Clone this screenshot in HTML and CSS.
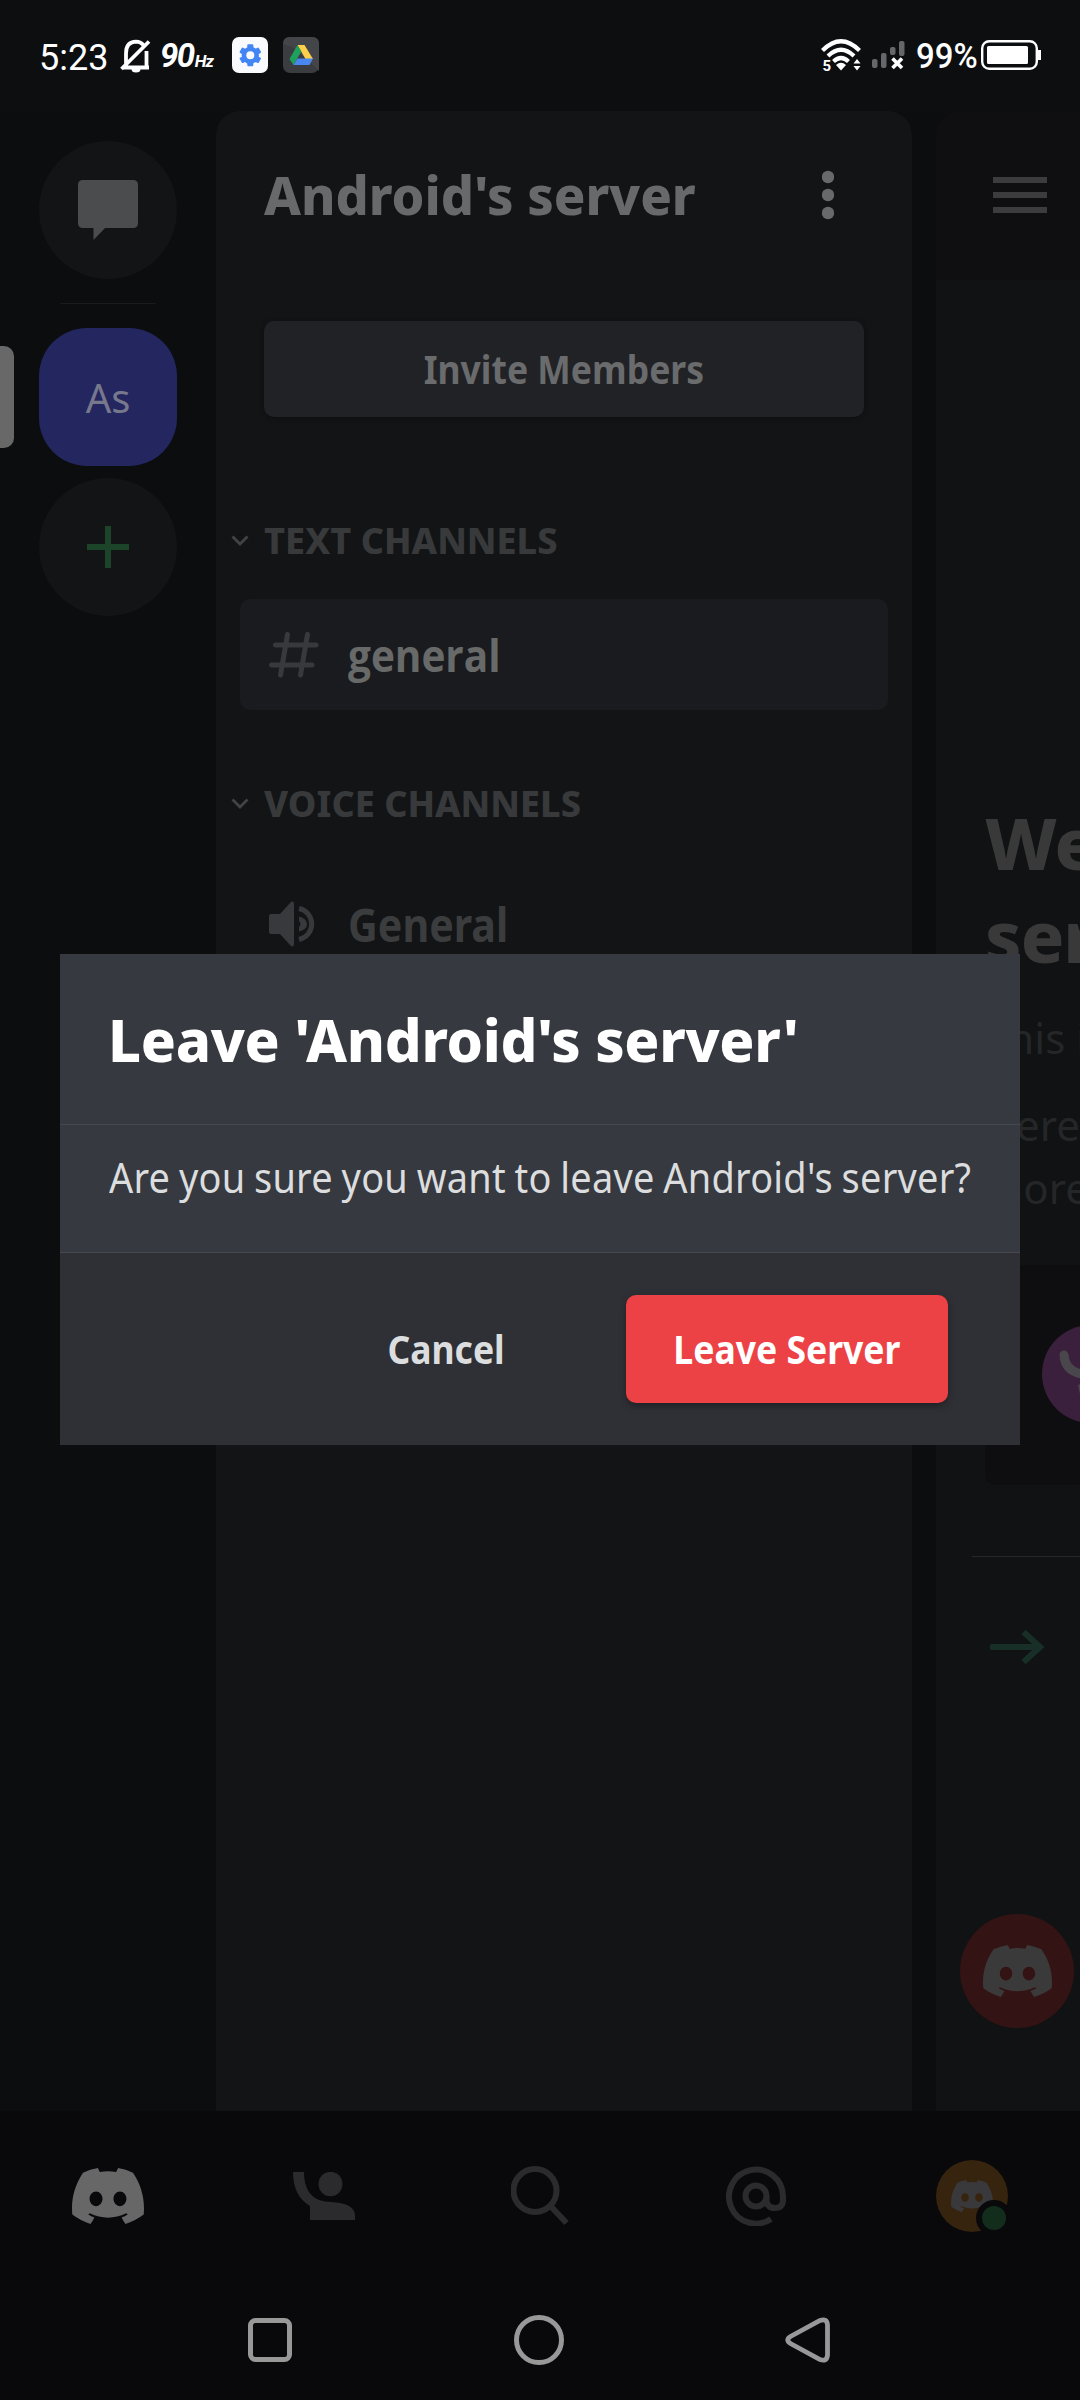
FILE: index.html
```
<!DOCTYPE html>
<html lang="en">
<head>
<meta charset="utf-8">
<title>Leave server</title>
<link rel="stylesheet" href="styles.css">
</head>
<body>
<svg width="0" height="0" class="defs">
  <symbol id="logo" viewBox="0 0 127.14 96.36" preserveAspectRatio="none"><path d="M107.7,8.07A105.15,105.15,0,0,0,81.47,0a72.06,72.06,0,0,0-3.36,6.83A97.68,97.68,0,0,0,49,6.83,72.37,72.37,0,0,0,45.64,0,105.89,105.89,0,0,0,19.39,8.09C2.79,32.65-1.71,56.6.54,80.21h0A105.73,105.73,0,0,0,32.71,96.36,77.7,77.7,0,0,0,39.6,85.25a68.42,68.42,0,0,1-10.85-5.18c.91-.66,1.8-1.34,2.66-2a75.57,75.57,0,0,0,64.32,0c.87.71,1.76,1.39,2.66,2a68.68,68.68,0,0,1-10.87,5.19,77,77,0,0,0,6.89,11.1A105.25,105.25,0,0,0,126.6,80.22h0C129.24,52.84,122.09,29.11,107.7,8.07ZM42.45,65.69C36.18,65.69,31,60,31,53s5-12.74,11.43-12.74S54,46,53.89,53,48.84,65.69,42.45,65.69Zm42.24,0C78.41,65.69,73.25,60,73.25,53s5-12.74,11.44-12.74S96.23,46,96.12,53,91.08,65.69,84.69,65.69Z"/></symbol>
</svg>
<div class="phone">
  <header class="status">
    <span class="clock">5:23</span>
    <svg class="bell" width="32" height="34" viewBox="0 0 32 34" fill="none" stroke="#fff" stroke-width="3.8"><path d="M2 28.500H29M6 28V14.500Q6 3 16 2.700Q21 2.700 23.500 6.500M26.500 12V28M1.500 30L29 2.500"/><path d="M11.500 30h9a4.500 3.500 0 0 1-9 0z" fill="#fff" stroke="none"/></svg>
    <span class="rate">90<small>Hz</small></span>
    <svg class="app1" width="36" height="36" viewBox="0 0 36 36"><rect width="36" height="36" rx="7" fill="#f8fafd"/><g fill="#4285f4"><circle cx="18.300" cy="18.300" r="8.600"/><rect x="15.300" y="7.300" width="6" height="22" rx="1"/><rect x="15.300" y="7.300" width="6" height="22" rx="1" transform="rotate(60 18.300 18.300)"/><rect x="15.300" y="7.300" width="6" height="22" rx="1" transform="rotate(120 18.300 18.300)"/></g><circle cx="18.300" cy="18.300" r="4" fill="#f8fafd"/></svg>
    <svg class="app2" width="36" height="36" viewBox="0 0 36 36"><rect width="36" height="36" rx="7" fill="#3b3c3f"/><path d="M0 7L9 10L30 28L36 34V7Q36 0 29 0H7Q0 0 0 7Z" fill="#444548"/><path d="M14.500 8H21.500L30 22H22.500Z" fill="#fdd04b"/><path d="M14.500 8L18.300 14.500L10.500 28L6.500 22Z" fill="#1fa15d"/><path d="M14.500 21.500H30L26.500 28H10.500Z" fill="#4a86ef"/></svg>
    <span class="grow"></span>
    <svg class="wifi" width="40" height="34" viewBox="0 0 40 34"><g fill="none" stroke="#fff" stroke-width="4.200"><path d="M1.500 11.500Q20-7 38.500 11.500"/><path d="M7 17Q20 4.500 33 17"/><path d="M12.500 22.500Q20 15.500 27.500 22.500"/></g><path d="M15 26Q20 21.500 25 26L20 31.500Z" fill="#fff"/><path d="M32.500 24.500L36 20L39.500 24.500ZM32.500 27L36 31.500L39.500 27Z" fill="#fff"/><text x="1.500" y="32" fill="#fff" font-family="Roboto" font-size="15" font-weight="700">5</text></svg>
    <svg class="signal" width="34" height="32" viewBox="0 0 34 32"><g fill="#66676a"><rect x="0" y="19" width="5.500" height="9" rx="2"/><rect x="9" y="13" width="5.500" height="15" rx="2"/><rect x="18" y="7" width="5.500" height="8" rx="2"/><rect x="27" y="1" width="5.500" height="15" rx="2"/></g><path d="M20.500 18.500L30 28M30 18.500L20.500 28" stroke="#fff" stroke-width="3.600"/></svg>
    <span class="pct">99%</span>
    <svg class="battery" width="60" height="30" viewBox="0 0 60 30"><rect x="1.200" y="1.200" width="54.600" height="27.600" rx="7" fill="none" stroke="#fff" stroke-width="2.400"/><rect x="6" y="6" width="41" height="18" rx="1.500" fill="#fff"/><rect x="56" y="10" width="4" height="10" fill="#fff"/></svg>
  </header>
  <main class="app">
    <nav class="rail">
      <div class="round dm"><svg width="60" height="60" viewBox="0 0 60 60"><path d="M5 0H55Q60 0 60 5V43Q60 48 55 48H27L15.500 60V48H5Q0 48 0 43V5Q0 0 5 0Z" fill="#4b4c4e"/></svg></div>
      <div class="rule"></div>
      <div class="server"><span class="pill"></span><span>As</span></div>
      <div class="round"><svg width="42" height="42" viewBox="0 0 42 42"><path d="M18 0h6v18h18v6H24v18h-6V24H0v-6h18z" fill="#1c4429"/></svg></div>
    </nav>
    <section class="channels">
      <div class="head"><h1>Android's server</h1><svg width="12" height="50" viewBox="0 0 12 50" fill="#68696a"><circle cx="6" cy="7" r="6.200"/><circle cx="6" cy="25" r="6.200"/><circle cx="6" cy="43" r="6.200"/></svg></div>
      <button class="invite"><span class="narrow">Invite Members</span></button>
      <div class="category"><svg width="18" height="12" viewBox="0 0 18 12"><path d="M1.500 1.500L9 9L16.500 1.500" fill="none" stroke="#424345" stroke-width="2.800"/></svg><span>TEXT CHANNELS</span></div>
      <div class="channel selected"><svg width="50" height="46" viewBox="0 0 50 46" fill="none" stroke="#38393c" stroke-width="5" stroke-linecap="round"><path d="M6.500 13H47M2.500 33H43"/><path d="M18.500 2.500L11.500 43M38.500 2.500L31.500 43"/></svg><span>general</span></div>
      <div class="category voice"><svg width="18" height="12" viewBox="0 0 18 12"><path d="M1.500 1.500L9 9L16.500 1.500" fill="none" stroke="#424345" stroke-width="2.800"/></svg><span>VOICE CHANNELS</span></div>
      <div class="channel"><svg width="50" height="46" viewBox="0 0 50 46"><path d="M2 13H11L21.500 1.500Q25-1 25 3V43Q25 47 21.500 44.500L11 33H2Q0 33 0 31V15Q0 13 2 13Z" fill="#38393c"/><path d="M30 7.500A15.800 15.800 0 0 1 30 38.500" fill="none" stroke="#38393c" stroke-width="5"/><path d="M30 15.500Q38 17.500 38 23T30 30.500V26Q33 23 30 20Z" fill="#38393c"/></svg><span>General</span></div>
    </section>
    <section class="chat">
      <div class="bar"><svg width="54" height="36" viewBox="0 0 54 36" fill="#3c3c3e"><path d="M0 0h54v6H0zM0 15h54v6H0zM0 30h54v6H0z"/></svg></div>
      <h2>Welcome to<br>server</h2>
      <p>This is</p>
      <p>Here<br><span class="more">more</span></p>
      <div class="card"><svg width="98" height="98" viewBox="0 0 98 98"><circle cx="49" cy="49" r="49" fill="#3a203c"/><path d="M22 30Q23 46 40 49Q46 43 52 32" fill="none" stroke="#4a474c" stroke-width="9" stroke-linecap="round"/><path d="M36 60L44 57V70L38 69Z" fill="#4a474c"/></svg></div>
      <div class="line"></div>
      <svg class="arrow" width="54" height="36" viewBox="0 0 54 36" fill="none" stroke="#182f27" stroke-width="6"><path d="M2.500 18H49" stroke-linecap="round"/><path d="M33.500 3L50 18L33.500 33"/></svg>
      <div class="avatar"><svg width="69" height="52" fill="#3b3a3a"><use href="#logo"/></svg></div>
    </section>
  </main>
  <nav class="tabs">
    <div><svg width="72" height="56" fill="#676768"><use href="#logo"/></svg></div>
    <div><svg width="62" height="48" viewBox="0 0 62 48" fill="#2b2b2d"><path d="M0 0H11Q11 22 26 28Q32 30 38 30Q61 31 62 43V48H17V34Q0 24 0 0Z"/><ellipse cx="37.500" cy="12" rx="12" ry="12.200"/></svg></div>
    <div><svg width="58" height="60" viewBox="0 0 58 60" fill="none" stroke="#2b2b2d" stroke-width="6"><circle cx="24" cy="24.500" r="21.500"/><path d="M39.500 40L55.500 57"/></svg></div>
    <div><svg width="60" height="60" viewBox="0 0 60 60" fill="none" stroke="#2b2b2d" stroke-width="6"><path d="M45 53A27 27 0 1 1 57 30V35.500Q56 42 49 42Q41 42 40.500 34V30"/><circle cx="30" cy="30" r="10.500"/></svg></div>
    <div><div class="me"><svg width="42" height="32" fill="#39383a"><use href="#logo"/></svg><i></i></div></div>
  </nav>
  <nav class="system">
    <svg width="44" height="44" viewBox="0 0 44 44"><rect x="2.500" y="2.500" width="39" height="39" rx="5" fill="none" stroke="#989899" stroke-width="5"/></svg>
    <svg width="50" height="50" viewBox="0 0 50 50"><circle cx="25" cy="25" r="22.500" fill="none" stroke="#989899" stroke-width="5"/></svg>
    <svg width="46" height="46" viewBox="0 0 46 46"><path d="M5.500 19.500L35 3.500Q42 1 42.500 8V38Q42 45 35 42.500L5.500 26.500Q0 23 5.500 19.500Z" fill="none" stroke="#989899" stroke-width="4.800"/></svg>
  </nav>
  <div class="dialog">
    <h3>Leave 'Android's server'</h3>
    <div class="body"><span>Are you sure you want to leave Android's server?</span></div>
    <div class="actions"><button class="cancel"><span class="narrow">Cancel</span></button><button class="leave"><span class="narrow">Leave Server</span></button></div>
  </div>
</div>
</body>
</html>
```
FILE: styles.css
```
*{box-sizing:border-box;margin:0;padding:0}
body{width:1080px;height:2400px;overflow:hidden;background:#09090b;font-family:"Noto Sans","Open Sans",sans-serif}
button{border:0;background:none;font:inherit;color:inherit}
svg{display:block;flex:none}
.defs{position:absolute}
.phone{position:relative;width:1080px;height:2400px;display:flex;flex-direction:column}

/* Status bar */
.status{height:111px;padding:0 39px 0 39px;display:flex;align-items:flex-start;background:#0c0e10;color:#fff;font-family:Roboto,sans-serif}
.clock{font-size:36px;line-height:40px;margin-top:38px;width:81px;white-space:nowrap}
.bell{margin-top:39px}
.rate{margin:36px 0 0 8px;width:72px;font:italic 700 33px/40px Roboto,sans-serif;white-space:nowrap;letter-spacing:-1.500px}
.rate small{font-size:17px;letter-spacing:-1px;margin-left:1px}
.app1{margin-top:37px}
.app2{margin:37px 0 0 15px}
.grow{flex:1}
.wifi{margin-top:39px}
.signal{margin:40px 0 0 11px}
.pct{margin:37px 0 0 10px;width:65px;font-size:35px;line-height:40px;font-weight:500;white-space:nowrap;transform:scaleX(.94);transform-origin:left}
.battery{margin-top:40px}

.app{height:2000px;display:flex;background:#0b0d0f;overflow:hidden}

/* Server rail */
.rail{width:216px;flex:none;padding-top:30px;display:flex;flex-direction:column;align-items:center}
.round{width:138px;height:138px;border-radius:50%;background:#121415;display:flex;align-items:center;justify-content:center}
.rule{width:96px;height:1px;background:#1a1b1d;margin:24px 0}
.server{position:relative;width:138px;height:138px;border-radius:48px;background:#23265f;display:flex;align-items:center;justify-content:center;font-size:40px;color:#77788c;margin-bottom:12px}
.pill{position:absolute;left:-39px;top:18px;width:14px;height:102px;border-radius:0 10px 10px 0;background:#686868}

/* Channel list */
.channels{width:696px;flex:none;background:#121416;border-radius:24px 24px 0 0;padding:0 24px}
.head{height:168px;padding:0 54px 0 24px;display:flex;align-items:center;justify-content:space-between}
h1{font-size:53px;line-height:72px;font-weight:800;color:#68696a;white-space:nowrap;transform:scaleX(.986);transform-origin:left}
.invite{display:block;width:600px;height:96px;margin:42px 24px 100px;border-radius:10px;background:#212226;color:#6a6b6c;font-size:40px;font-weight:700;line-height:60px;box-shadow:0 1px 4px #0e0f10}
.narrow{display:inline-block;transform:scaleX(.888);white-space:nowrap}
.category{height:48px;margin-left:-9px;display:flex;align-items:center;gap:15px;font-size:36px;font-weight:800;line-height:48px;color:#38393b;white-space:nowrap}
.category span{transform:scaleX(1.003);transform-origin:left}
.channel{height:111px;margin-top:40px;padding-left:29px;border-radius:10px;display:flex;align-items:center;gap:29px;color:#3b3c3e;font-size:46px;font-weight:700;line-height:70px}
.channel span{transform:scaleX(.895);transform-origin:left}
.selected{margin-top:34px;background:#1a1b1e;color:#686969;font-family:"Open Sans",sans-serif;font-size:45px}
.selected span{transform:scaleX(.9)}
.voice{margin-top:70px}

/* Chat panel, partly off screen */
.chat{width:144px;margin-left:24px;flex:none;background:#101214;border-radius:24px 0 0 0;overflow:hidden}
.bar{height:169px;padding:0 0 2px 57px;display:flex;align-items:center;background:#0f0f11}
h2{margin:516px 0 0 49px;font-size:72px;line-height:93px;font-weight:800;color:#393939;white-space:nowrap;letter-spacing:-1px}
.chat p{margin:24px 0 0 49px;font-size:42px;line-height:63px;color:#252628;white-space:nowrap}
.more{margin-left:-1px}
.card{height:220px;margin:46px 0 0 49px;padding:60px 0 0 57px;border-radius:10px 0 0 10px;background:#0e0e10;overflow:hidden}
.line{height:1px;margin:71px 0 0 36px;background:#26282a}
.arrow{margin:72px 0 0 54px}
.avatar{width:114px;height:114px;margin:249px 0 0 24px;border-radius:50%;background:#341314;display:flex;align-items:center;justify-content:center}

/* Bottom bars */
.tabs{height:170px;display:grid;grid-template-columns:repeat(5,1fr);background:#09090b}
.tabs>div{display:flex;align-items:center;justify-content:center}
.me{position:relative;width:72px;height:72px;border-radius:50%;background:#36240e;display:flex;align-items:center;justify-content:center}
.me i{position:absolute;left:40px;top:40px;width:36px;height:36px;border-radius:50%;border:6px solid #09090b;background:#122d1b}
.system{height:119px;padding:0 249px 2px 248px;display:flex;align-items:center;justify-content:space-between}

/* Confirmation dialog */
.dialog{position:absolute;left:60px;top:954px;width:960px;height:491px;background:#36393f;white-space:nowrap;display:flex;flex-direction:column}
h3{height:171px;padding-left:48px;font-size:58px;font-weight:800;line-height:171px;color:#fff;border-bottom:1px solid #45484e;letter-spacing:-.3px}
.body{height:128px;padding:24px 0 0 49px;font-size:41px;line-height:56px;color:#dcddde;border-bottom:1px solid #45484e}
.body span{display:inline-block;transform:scaleX(.925);transform-origin:left;word-spacing:-1.500px;letter-spacing:.25px}
.actions{flex:1;padding:42px 72px 0 0;background:#2f3035;display:flex;justify-content:flex-end;align-items:flex-start;font-size:40px;font-weight:700;color:#dcddde}
.actions button{height:108px;line-height:60px}
.cancel{margin-right:114px}
.leave{width:322px;border-radius:10px;background:#ed4245;color:#fff;box-shadow:0 3px 6px #202125}
```
